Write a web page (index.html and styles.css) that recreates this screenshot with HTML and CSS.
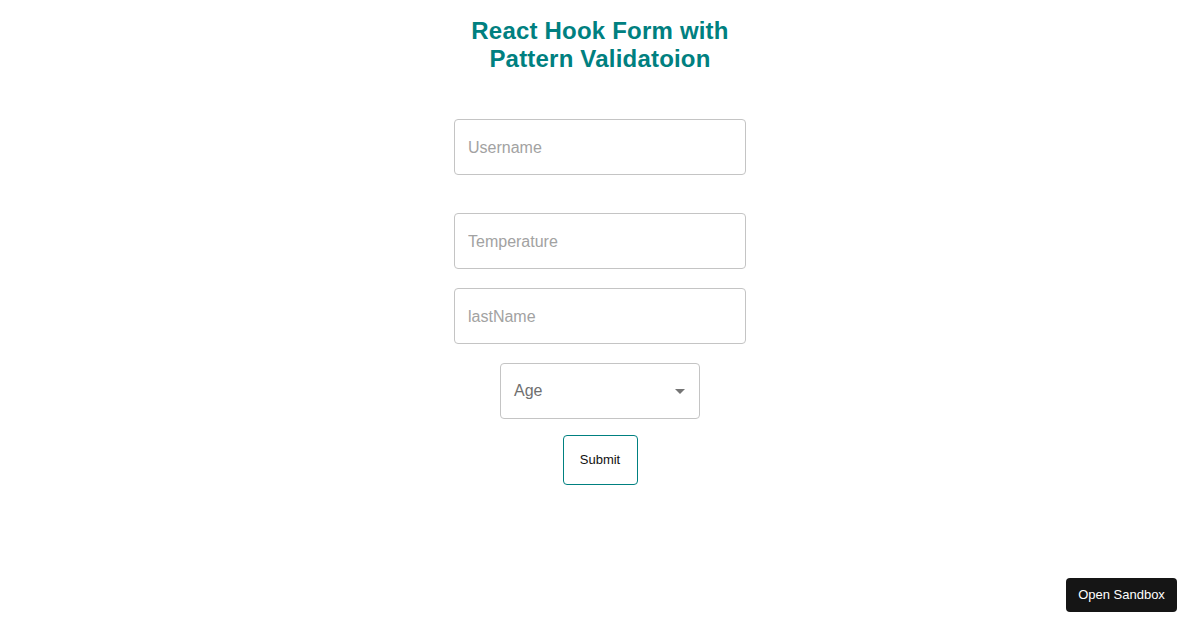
FILE: index.html
```html
<!DOCTYPE html>
<html>
<head>
<meta charset="utf-8">
<link rel="stylesheet" href="styles.css">
</head>
<body>
<div class="app">
  <h2 class="title">React Hook Form with<br>Pattern Validatoion</h2>
  <form class="form">
    <div class="field field-first"><input class="input" type="text" placeholder="Username"></div>
    <div class="field"><input class="input" type="text" placeholder="Temperature"></div>
    <div class="field"><input class="input" type="text" placeholder="lastName"></div>
    <div class="select">
      <span class="select-label">Age</span>
      <svg class="caret" width="10" height="5" viewBox="0 0 10 5"><path d="M0 0 L10 0 L5 5 Z" fill="#757575"/></svg>
    </div>
    <button class="submit" type="button">Submit</button>
  </form>
</div>
<button class="sandbox" type="button">Open Sandbox</button>
</body>
</html>
```
FILE: styles.css
```css
html, body {
  margin: 0;
  padding: 0;
  background: #fff;
  font-family: "Liberation Sans", Arial, sans-serif;
}
.app {
  display: flex;
  flex-direction: column;
  align-items: center;
  padding-top: 17px;
}
.title {
  margin: 0;
  font-size: 24px;
  line-height: 28px;
  font-weight: bold;
  letter-spacing: 0.2px;
  color: #008080;
  text-align: center;
}
.form {
  display: flex;
  flex-direction: column;
  align-items: center;
  margin-top: 46px;
}
.field {
  margin-top: 19px;
}
.field-first {
  margin-top: 0;
  margin-bottom: 19px;
}
.input {
  box-sizing: border-box;
  width: 292px;
  height: 56px;
  border: 1px solid #c4c4c4;
  border-radius: 4px;
  padding: 2px 14px 0 13px;
  font-family: "Liberation Sans", Arial, sans-serif;
  font-size: 16px;
  color: #222;
  outline: none;
  display: block;
}
.input::placeholder {
  color: #a2a2a2;
}
.select {
  box-sizing: border-box;
  width: 200px;
  height: 56px;
  margin-top: 19px;
  border: 1px solid #c4c4c4;
  border-radius: 4px;
  padding: 0 14px 0 13px;
  display: flex;
  align-items: center;
  justify-content: space-between;
}
.select-label {
  font-size: 16px;
  color: #6f6f6f;
}
.caret {
  display: block;
  margin-right: 0;
}
.submit {
  margin-top: 16px;
  box-sizing: border-box;
  width: 75px;
  height: 50px;
  background: #fff;
  border: 1px solid #008080;
  border-radius: 4px;
  font-family: "Liberation Sans", Arial, sans-serif;
  font-size: 13px;
  color: #111;
  padding: 0 0 2px;
}
.sandbox {
  position: fixed;
  right: 23px;
  bottom: 18px;
  box-sizing: border-box;
  width: 111px;
  height: 34px;
  background: #151515;
  color: #fff;
  border: none;
  border-radius: 4px;
  font-family: "Liberation Sans", Arial, sans-serif;
  font-size: 13px;
  padding: 0 0 2px;
}
```
